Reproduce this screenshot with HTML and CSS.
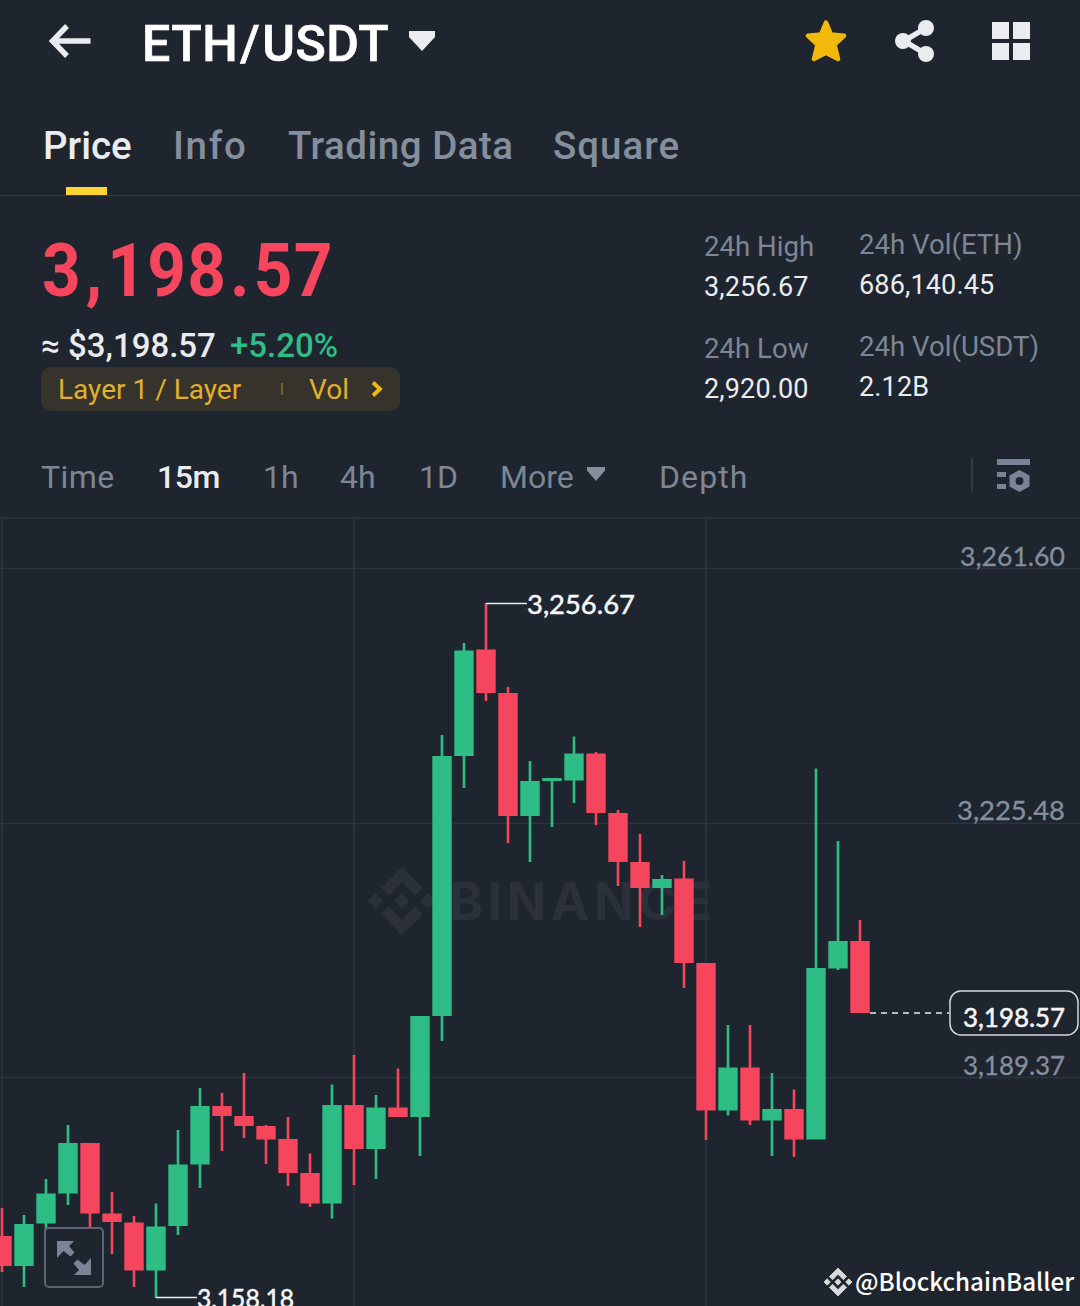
FILE: index.html
```html
<!DOCTYPE html>
<html lang="en">
<head>
<meta charset="utf-8">
<title>ETH/USDT</title>
<link rel="stylesheet" href="styles.css">
</head>
<body>
<header class="topbar">
  <svg class="back" width="44" height="36" viewBox="0 0 44 36"><path d="M42.500 18H5M19 3 4.500 18l14.500 15" fill="none" stroke="#eaecef" stroke-width="5.400"/></svg>
  <h1 class="pair">ETH<span class="slash">/</span>USDT</h1>
  <svg class="caret" width="26" height="20" viewBox="0 0 26 20"><path d="M0 0h26v6L13 20 0 6z" fill="#eaecef"/></svg>
  <div class="actions">
    <svg width="42" height="44" viewBox="0 0 42 44"><path d="M21 3.500 26 15.500 39 16.800 29.500 25.500 33 40 21 33.800 9 40 12.500 25.500 3 16.800 16 15.500z" fill="#f0b90b" stroke="#f0b90b" stroke-width="4.500" stroke-linejoin="round"/></svg>
    <svg width="40" height="44" viewBox="0 0 40 44"><path d="M31 9 9 22l22 13" fill="none" stroke="#eaecef" stroke-width="5.500"/><g fill="#eaecef"><circle cx="31" cy="9" r="8"/><circle cx="8" cy="22" r="8"/><circle cx="31" cy="35" r="8"/></g></svg>
    <svg width="38" height="38" viewBox="0 0 38 38"><path d="M0 0h17v17H0zM21 0h17v17H21zM0 21h17v17H0zM21 21h17v17H21z" fill="#eaecef"/></svg>
  </div>
</header>
<nav class="tabs">
  <a class="tab active">Price</a>
  <a class="tab info">Info</a>
  <a class="tab data">Trading Data</a>
  <a class="tab square">Square</a>
</nav>
<section class="summary">
  <div class="quote">
    <div class="price">3<span class="comma">,</span>198<span class="dot">.</span>57</div>
    <div class="fiat"><span class="approx">≈</span><span class="usd">$3,198.57</span><span class="change">+5.20%</span></div>
    <div class="tags"><span class="layer">Layer 1 / Layer</span><i class="divider"></i><span class="vol">Vol</span>
      <svg width="12" height="16" viewBox="0 0 12 16"><path d="M2 1.500 9 8l-7 6.500" fill="none" stroke="#f0b90b" stroke-width="3.800"/></svg>
    </div>
  </div>
  <dl class="stats left">
    <dt>24h High</dt><dd>3,256.67</dd>
    <dt>24h Low</dt><dd>2,920.00</dd>
  </dl>
  <dl class="stats right">
    <dt>24h Vol(ETH)</dt><dd>686,140.45</dd>
    <dt>24h Vol(USDT)</dt><dd>2.12B</dd>
  </dl>
</section>
<nav class="intervals">
  <a class="iv time">Time</a>
  <a class="iv m15 active">15m</a>
  <a class="iv h1">1h</a>
  <a class="iv h4">4h</a>
  <a class="iv d1">1D</a>
  <a class="iv more">More</a>
  <svg class="more-caret" width="18" height="14" viewBox="0 0 18 14"><path d="M0 0h18v3.500L9 14 0 3.500z" fill="#848e9c"/></svg>
  <a class="iv depth">Depth</a>
  <i class="rule"></i>
  <svg class="settings" width="33" height="33" viewBox="0 0 33 33"><path d="M0 0h33v6H0zM0 13h9v5H0zM0 25h9v5H0z" fill="#7b8496"/><path fill-rule="evenodd" d="m22.500 11 10 5.600v10.800l-10 5.600-10-5.600V16.600zM22.500 18a4 4 0 1 0 0 8 4 4 0 0 0 0-8z" fill="#7b8496"/></svg>
</nav>
<main class="chart">
  <svg class="plot" width="1080" height="790" viewBox="0 516 1080 790">
    <defs>
      <path id="mark" d="M16.624 13.9202l2.7175 2.7154-7.353 7.353-7.353-7.352 2.7175-2.7164 4.6355 4.6595 4.6356-4.6595zm4.6366-4.6366L24 12l-2.7154 2.7164L18.5682 12l2.6924-2.7164zm-9.272.001l2.7163 2.6914-2.7164 2.7174v-.001L9.2721 12l2.7164-2.7154zm-9.2722-.001L5.4088 12l-2.6914 2.6924L0 12l2.7164-2.7164zM11.9885.0115l7.353 7.329-2.7174 2.7154-4.6356-4.6356-4.6355 4.6595-2.7174-2.7154 7.353-7.353z"/>
    </defs>
    <path class="grid" d="M0 518H1080M0 568.500H1080M0 823.500H1080M0 1077.500H1080M2 518V1306M354 518V1306M706 518V1306"/>
    <g class="watermark">
      <use href="#mark" transform="translate(368 867) scale(2.840)"/>
      <text x="449" y="920" textLength="263">BINANCE</text>
    </g>
    <g id="candles"></g>
    <path class="leader" d="M486 603.500H527M156 1297.500H197"/>
    <path class="last" d="M870 1013H949"/>
    <rect class="badge" x="950" y="991" width="128" height="44" rx="11"/>
    <g class="label bright">
      <text x="527" y="614" textLength="108" lengthAdjust="spacingAndGlyphs">3,256.67</text>
      <text x="197" y="1308" textLength="97" lengthAdjust="spacingAndGlyphs">3,158.18</text>
      <text x="963" y="1027" textLength="102" lengthAdjust="spacingAndGlyphs">3,198.57</text>
    </g>
    <g class="label">
      <text x="960" y="566" textLength="105" lengthAdjust="spacingAndGlyphs">3,261.60</text>
      <text x="957" y="820" textLength="108" lengthAdjust="spacingAndGlyphs">3,225.48</text>
      <text x="963" y="1075" textLength="102" lengthAdjust="spacingAndGlyphs">3,189.37</text>
    </g>
  </svg>
  <button class="expand" aria-label="Expand">
    <svg width="34" height="34" viewBox="0 0 34 34"><path d="M0 0h17l-5 5 5.500 6.500-4 4L6.500 10 0 17zM34 34H17l5-5-5.500-6.500 4-4L27.500 24l6.500-7z" fill="#7b8496"/></svg>
  </button>
  <div class="author">
    <svg width="28" height="28" viewBox="0 0 24 24"><use href="#mark" fill="#d9dadc" stroke="#d9dadc" stroke-width="0.700"/></svg>
    <span class="handle">@BlockchainBaller</span>
  </div>
</main>
<script src="chart.js"></script>
</body>
</html>
```
FILE: styles.css
```css
* { box-sizing: border-box; }
body { margin: 0; width: 1080px; height: 1306px; overflow: hidden; background: #1f252f; color: #eaecef; font-family: Roboto, sans-serif; }
svg { display: block; flex: none; }
a, span { white-space: nowrap; }

.topbar { display: flex; align-items: center; height: 82px; padding: 0 50px 0 48px; }
.pair { margin: 5px 0 0 50px; width: 267px; font-size: 50px; line-height: 60px; font-weight: 500; letter-spacing: 0.5px; color: #fff; -webkit-text-stroke: 0.7px #fff; }
.slash { margin: 0 2px; }
.actions { display: flex; align-items: center; gap: 48px; margin-left: auto; }
.actions svg:last-child { margin-left: 9px; }

.tabs { display: flex; height: 114px; padding: 37px 0 0 43px; border-bottom: 1px solid #333a44; font-size: 38.500px; line-height: 54px; font-weight: 500; letter-spacing: 0.5px; color: #848e9c; }
.active { color: #eaecef; }
.tab.active { position: relative; width: 130px; letter-spacing: 0; }
.tab.active::after { content: ""; position: absolute; left: 23px; bottom: 0; width: 41px; height: 8px; background: #fcd535; }
.tab.info { width: 115px; letter-spacing: 1.700px; }
.data { width: 265px; }
.tab.square { letter-spacing: 1px; }

.summary { display: flex; height: 241px; padding-left: 41px; }
.quote { width: 663px; }
.price { height: 117px; padding: 33px 0 0 1px; font-size: 75px; line-height: 82px; font-weight: 700; letter-spacing: 1.5px; color: #f6465d; transform: scaleX(0.9); transform-origin: 0 0; }
.comma { margin: 0 4px; }
.dot { margin: 0 3px; }
.fiat { display: flex; height: 54px; padding-top: 11px; font-size: 33px; line-height: 44px; font-weight: 500; }
.approx { width: 27px; }
.usd { width: 162px; }
.change { color: #2ebd85; }
.tags { display: flex; align-items: center; width: 359px; height: 44px; padding-left: 17px; border-radius: 10px; background: #35332c; color: #e0b02b; font-size: 28px; }
.layer { width: 223px; }
.divider { width: 2px; height: 12px; margin-right: 26px; background: #76612b; }
.vol { width: 62px; }
.stats { margin: 0; line-height: 40px; }
.stats.left { width: 155px; padding-top: 31px; }
.stats.right { padding-top: 29px; }
dt { color: #7d8694; font-size: 27.6px; white-space: nowrap; }
dd { margin: 0 0 22px; font-size: 27px; letter-spacing: 0.15px; }

.intervals { display: flex; align-items: center; height: 79px; padding-left: 41px; font-size: 32px; color: #7d8694; }
.iv.active { color: #eaecef; font-weight: 500; }
.time { width: 116px; letter-spacing: 0.4px; }
.m15 { width: 106px; letter-spacing: -0.5px; }
.h1 { width: 77px; }
.h4 { width: 79px; }
.d1 { width: 81px; }
.more { width: 87px; }
.more-caret { margin: -6px 54px 0 0; }
.depth { width: 312px; letter-spacing: 1.1px; }
.rule { width: 2px; height: 34px; margin: -4px 24px 0 0; background: #333a44; }
.settings { margin-top: -2px; }

.chart { position: relative; }
.grid { fill: none; stroke: #2d343e; stroke-width: 1.500px; }
.watermark { fill: #2b303a; font: 700 52px Inter, sans-serif; }
.up { fill: #2ebd85; }
.down { fill: #f6465d; }
.leader { fill: none; stroke: #eaecef; stroke-width: 1.500px; }
.last { stroke: #eaecef; stroke-width: 1.500px; stroke-dasharray: 6 5; }
.badge { fill: #1f252f; stroke: #d5d8dd; stroke-width: 1.500px; }
.label { fill: #848e9c; stroke: #848e9c; stroke-width: 0.300px; font: 400 26.500px Lato, sans-serif; }
.bright { fill: #f5f6f8; stroke: #f5f6f8; stroke-width: 0.500px; }
.expand { position: absolute; left: 44px; top: 711px; width: 60px; height: 61px; padding: 0; display: flex; align-items: center; justify-content: center; background: #1f252f; border: 2px solid #5c6473; border-radius: 5px; }
.author { position: absolute; left: 824px; top: 748px; display: flex; align-items: center; gap: 3px; height: 36px; color: #fff; }
.handle { margin-top: -4px; font: 500 24.200px "Noto Sans CJK SC", sans-serif; }
```
FILE: chart.js
```js
// [direction, wick top, body top, body bottom, wick bottom]
const candles = [
  ["down", 1208, 1236, 1266, 1272], ["up", 1215, 1224, 1266, 1287],
  ["up", 1179, 1193.5, 1223.5, 1240], ["up", 1125, 1143, 1193.5, 1205],
  ["down", 1143, 1143, 1213.5, 1230], ["down", 1192, 1213.5, 1222, 1254],
  ["down", 1216, 1222.5, 1270.5, 1287], ["up", 1203.5, 1226.5, 1270.5, 1298],
  ["up", 1130, 1164.5, 1226, 1235], ["up", 1088, 1106, 1164.5, 1188],
  ["down", 1093, 1106, 1116, 1151], ["down", 1073, 1116, 1126, 1138],
  ["down", 1125, 1126, 1139.5, 1164], ["down", 1117, 1139, 1173, 1186],
  ["down", 1153.5, 1173, 1203.5, 1207], ["up", 1084.5, 1105, 1203.5, 1218.5],
  ["down", 1055, 1105, 1149, 1185], ["up", 1095, 1107.5, 1149, 1179],
  ["down", 1068.5, 1107.5, 1117, 1117], ["up", 1016, 1016, 1117, 1156],
  ["up", 735, 756, 1016, 1041], ["up", 643, 650.5, 756, 788],
  ["down", 603, 649.5, 693, 701], ["down", 687, 693, 816, 843],
  ["up", 761, 781, 816, 862], ["up", 778, 778, 781, 827],
  ["up", 736.5, 753.5, 780.5, 803], ["down", 752, 753.5, 813, 825],
  ["down", 810, 813, 862, 886], ["down", 834, 862, 888, 927],
  ["up", 875, 879, 888, 915], ["down", 861, 878.5, 963, 988],
  ["down", 963, 963, 1110.5, 1140], ["up", 1025, 1067.5, 1110.5, 1115.5],
  ["down", 1025, 1067.5, 1120.5, 1125], ["up", 1073, 1109, 1120.5, 1156],
  ["down", 1089.5, 1109, 1139.5, 1157], ["up", 768.5, 968, 1139.5, 1139.5],
  ["up", 841, 941, 968.5, 970], ["down", 920, 941, 1013, 1013]
];

document.getElementById("candles").innerHTML = candles.map(([dir, high, top, bottom, low], i) => {
  const x = 2 + i * 22;
  return `<path class="${dir}" d="M${x - 1.3} ${high}h2.6V${low}h-2.6zM${x - 9.7} ${top}h19.4V${bottom}h-19.4z"/>`;
}).join("");
```
